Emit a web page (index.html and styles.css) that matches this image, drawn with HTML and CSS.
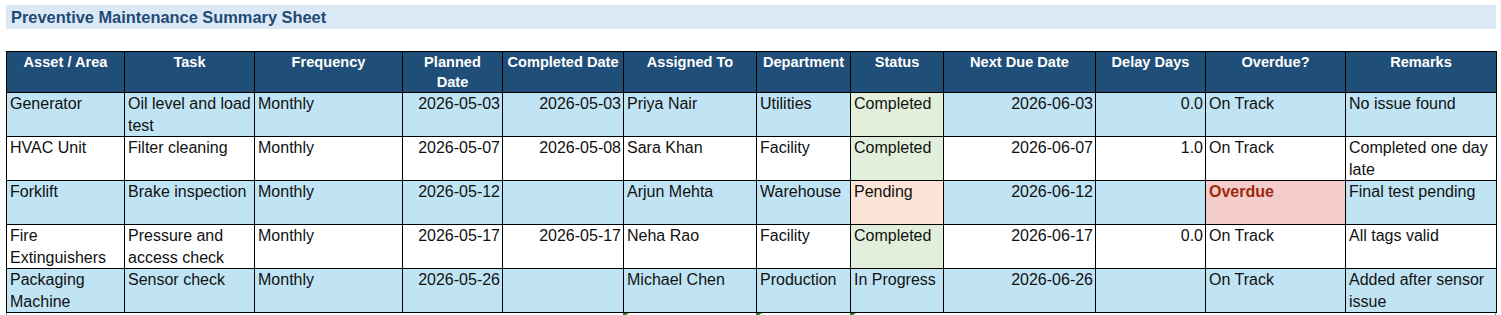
FILE: index.html
```html
<!DOCTYPE html>
<html lang="en">
<head>
<meta charset="utf-8">
<title>Preventive Maintenance Summary Sheet</title>
<link rel="stylesheet" href="styles.css">
</head>
<body>
<div class="sheet">
  <div class="title-bar">Preventive Maintenance Summary Sheet</div>
  <table class="pm-table">
    <colgroup>
      <col class="c-asset">
      <col class="c-task">
      <col class="c-freq">
      <col class="c-planned">
      <col class="c-completed">
      <col class="c-assigned">
      <col class="c-dept">
      <col class="c-status">
      <col class="c-next">
      <col class="c-delay">
      <col class="c-overdue">
      <col class="c-remarks">
    </colgroup>
    <thead>
      <tr>
        <th>Asset / Area</th>
        <th>Task</th>
        <th>Frequency</th>
        <th>Planned<br>Date</th>
        <th>Completed Date</th>
        <th>Assigned To</th>
        <th>Department</th>
        <th>Status</th>
        <th>Next Due Date</th>
        <th>Delay Days</th>
        <th>Overdue?</th>
        <th>Remarks</th>
      </tr>
    </thead>
    <tbody>
      <tr class="row-blue">
        <td>Generator</td>
        <td>Oil level and load test</td>
        <td>Monthly</td>
        <td class="num">2026-05-03</td>
        <td class="num">2026-05-03</td>
        <td>Priya Nair</td>
        <td>Utilities</td>
        <td class="st-done">Completed</td>
        <td class="num">2026-06-03</td>
        <td class="num">0.0</td>
        <td>On Track</td>
        <td>No issue found</td>
      </tr>
      <tr class="row-white">
        <td>HVAC Unit</td>
        <td>Filter cleaning</td>
        <td>Monthly</td>
        <td class="num">2026-05-07</td>
        <td class="num">2026-05-08</td>
        <td>Sara Khan</td>
        <td>Facility</td>
        <td class="st-done">Completed</td>
        <td class="num">2026-06-07</td>
        <td class="num">1.0</td>
        <td>On Track</td>
        <td>Completed one day late</td>
      </tr>
      <tr class="row-blue">
        <td>Forklift</td>
        <td>Brake inspection</td>
        <td>Monthly</td>
        <td class="num">2026-05-12</td>
        <td class="num"></td>
        <td>Arjun Mehta</td>
        <td>Warehouse</td>
        <td class="st-pending">Pending</td>
        <td class="num">2026-06-12</td>
        <td class="num"></td>
        <td class="flag-overdue">Overdue</td>
        <td>Final test pending</td>
      </tr>
      <tr class="row-white">
        <td>Fire Extinguishers</td>
        <td>Pressure and access check</td>
        <td>Monthly</td>
        <td class="num">2026-05-17</td>
        <td class="num">2026-05-17</td>
        <td>Neha Rao</td>
        <td>Facility</td>
        <td class="st-done">Completed</td>
        <td class="num">2026-06-17</td>
        <td class="num">0.0</td>
        <td>On Track</td>
        <td>All tags valid</td>
      </tr>
      <tr class="row-blue">
        <td>Packaging Machine</td>
        <td>Sensor check</td>
        <td>Monthly</td>
        <td class="num">2026-05-26</td>
        <td class="num"></td>
        <td>Michael Chen</td>
        <td>Production</td>
        <td>In Progress</td>
        <td class="num">2026-06-26</td>
        <td class="num"></td>
        <td>On Track</td>
        <td>Added after sensor issue</td>
      </tr>
    </tbody>
  </table>
  <div class="below">
    <span class="marker m1"></span>
    <span class="marker m2"></span>
    <span class="marker m3"></span>
  </div>
</div>
</body>
</html>
```

FILE: styles.css
```css
html, body {
  margin: 0;
  padding: 0;
  background: #ffffff;
}

body {
  font-family: "Liberation Sans", Arial, sans-serif;
  color: #111111;
}

.sheet {
  padding: 5px 5px 0 6px;
}

.title-bar {
  background: #dbe9f6;
  color: #1f4a75;
  font-weight: bold;
  font-size: 16.4px;
  height: 24px;
  line-height: 24px;
  padding-left: 5px;
  box-sizing: border-box;
  width: 1490px;
}

.pm-table {
  margin-top: 22px;
  border-collapse: collapse;
  table-layout: fixed;
  width: 1490px;
}

.c-asset { width: 118px; }
.c-task { width: 130px; }
.c-freq { width: 148px; }
.c-planned { width: 100px; }
.c-completed { width: 121px; }
.c-assigned { width: 133px; }
.c-dept { width: 94px; }
.c-status { width: 93px; }
.c-next { width: 152px; }
.c-delay { width: 110px; }
.c-overdue { width: 140px; }
.c-remarks { width: 151px; }

.pm-table th,
.pm-table td {
  border: 1px solid #000000;
  vertical-align: top;
  overflow: hidden;
}

.pm-table th {
  background: #1f4e78;
  color: #ffffff;
  font-weight: bold;
  font-size: 14.6px;
  line-height: 20px;
  height: 40px;
  padding: 0 1px;
  text-align: center;
  white-space: nowrap;
}

.pm-table td {
  font-size: 16px;
  line-height: 21.5px;
  height: 43px;
  padding: 0 2px 0 3px;
  text-align: left;
}

.row-blue td {
  background: #c0e4f4;
}

.row-white td {
  background: #ffffff;
}

.pm-table td.num {
  text-align: right;
}

.pm-table td.st-done {
  background: #e2efda;
}

.pm-table td.st-pending {
  background: #fce4d6;
}

.pm-table td.flag-overdue {
  background: #f4cccc;
  color: #9c2a0a;
  font-weight: bold;
}

.below {
  position: relative;
  height: 10px;
  width: 1490px;
  border-left: 1px solid #5b9bd5;
  border-right: 1px solid #5b9bd5;
  box-sizing: border-box;
}

.marker {
  position: absolute;
  top: 0;
  width: 0;
  height: 0;
  border-top: 4px solid #1e7b1e;
  border-right: 6px solid transparent;
}

.m1 { left: 616px; }
.m2 { left: 749px; }
.m3 { left: 843px; }
```
